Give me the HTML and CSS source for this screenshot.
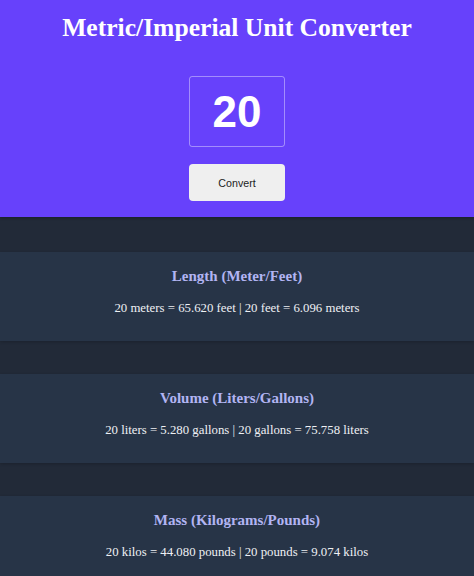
FILE: index.html
```html
<!DOCTYPE html>
<html lang="en">
<head>
<meta charset="utf-8">
<title>Metric/Imperial Unit Converter</title>
<link rel="stylesheet" href="styles.css">
</head>
<body>
<header class="hero">
  <h1 class="title">Metric/Imperial Unit Converter</h1>
  <input class="num-input" type="text" value="20">
  <button class="convert-btn" type="button">Convert</button>
</header>
<main class="results">
  <section class="card">
    <h3 class="card-title">Length (Meter/Feet)</h3>
    <p class="card-text">20 meters = 65.620 feet | 20 feet = 6.096 meters</p>
  </section>
  <section class="card">
    <h3 class="card-title">Volume (Liters/Gallons)</h3>
    <p class="card-text">20 liters = 5.280 gallons | 20 gallons = 75.758 liters</p>
  </section>
  <section class="card">
    <h3 class="card-title">Mass (Kilograms/Pounds)</h3>
    <p class="card-text">20 kilos = 44.080 pounds | 20 pounds = 9.074 kilos</p>
  </section>
</main>
</body>
</html>
```
FILE: styles.css
```css
html, body {
  margin: 0;
  padding: 0;
}
body {
  background: #222a38;
  font-family: "Liberation Serif", "Times New Roman", serif;
  color: #eef0f4;
}
.hero {
  background: #6741fb;
  display: flex;
  flex-direction: column;
  align-items: center;
  padding: 13px 0 16px;
  box-shadow: 0 1px 3px rgba(0, 0, 0, 0.25);
  position: relative;
  z-index: 1;
}
.title {
  margin: 0 0 34px;
  font-size: 25.6px;
  font-weight: bold;
  line-height: 1.15;
  color: #ffffff;
}
.num-input {
  box-sizing: border-box;
  width: 96px;
  height: 71px;
  margin: 0 0 17px;
  padding: 0;
  border: 1px solid rgba(255, 255, 255, 0.4);
  border-radius: 3px;
  background: transparent;
  color: #ffffff;
  font-family: "Liberation Sans", Arial, sans-serif;
  font-weight: bold;
  font-size: 44px;
  text-align: center;
  outline: none;
}
.convert-btn {
  box-sizing: border-box;
  width: 96px;
  height: 37px;
  border: none;
  border-radius: 4px;
  background: #efefef;
  color: #222222;
  font-family: "Liberation Sans", Arial, sans-serif;
  font-size: 10.67px;
  cursor: pointer;
}
.results {
  display: flex;
  flex-direction: column;
  gap: 33px;
  padding-top: 35px;
}
.card {
  background: #273447;
  height: 89px;
  box-sizing: border-box;
  padding-top: 16px;
  text-align: center;
  box-shadow: 0 1px 3px rgba(0, 0, 0, 0.2);
}
.card-title {
  margin: 0 0 15px;
  font-size: 15px;
  font-weight: bold;
  line-height: 1.15;
  color: #b2b4f3;
}
.card-text {
  margin: 0;
  font-size: 12.8px;
  line-height: 1.15;
  color: #eef0f4;
}
```
